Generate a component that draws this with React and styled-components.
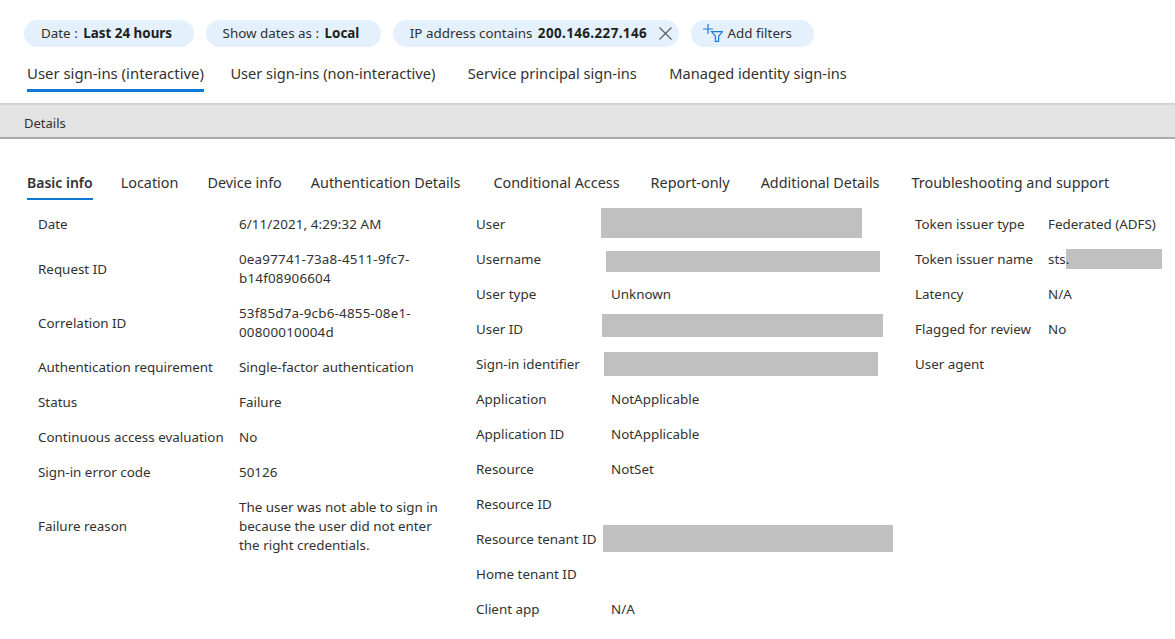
import React from 'react';
import styled, { createGlobalStyle } from 'styled-components';

const GlobalStyle = createGlobalStyle`
    html, body {
        margin: 0;
        padding: 0;
        background: #fff;
        font-family: "Noto Sans", "Open Sans", sans-serif;
        font-size: 13.4px;
        color: #323130;
    }
`;

const columnOne = [
    { label: 'Date', lines: ['6/11/2021, 4:29:32 AM'], spacing: 0.1 },
    { label: 'Request ID', lines: ['0ea97741-73a8-4511-9fc7-', 'b14f08906604'], spacing: 0.2 },
    { label: 'Correlation ID', lines: ['53f85d7a-9cb6-4855-08e1-', '00800010004d'], spacing: 0.2 },
    { label: 'Authentication requirement', lines: ['Single-factor authentication'] },
    { label: 'Status', lines: ['Failure'] },
    { label: 'Continuous access evaluation', lines: ['No'] },
    { label: 'Sign-in error code', lines: ['50126'] },
    { label: 'Failure reason', lines: ['The user was not able to sign in', 'because the user did not enter', 'the right credentials.'] },
];

const columnTwo = [
    { label: 'User', mask: { left: -10, top: -17, w: 261, h: 30 } },
    { label: 'Username', mask: { left: -5, top: -9, w: 274, h: 21 } },
    { label: 'User type', value: 'Unknown' },
    { label: 'User ID', mask: { left: -9, top: -16, w: 281, h: 23 } },
    { label: 'Sign-in identifier', mask: { left: -7, top: -13, w: 274, h: 24 } },
    { label: 'Application', value: 'NotApplicable' },
    { label: 'Application ID', value: 'NotApplicable' },
    { label: 'Resource', value: 'NotSet' },
    { label: 'Resource ID' },
    { label: 'Resource tenant ID', mask: { left: -8, top: -15, w: 290, h: 27 } },
    { label: 'Home tenant ID' },
    { label: 'Client app', value: 'N/A' },
];

const columnThree = [
    { label: 'Token issuer type', value: 'Federated (ADFS)' },
    { label: 'Token issuer name', value: 'sts.', mask: { left: 18, top: -11, w: 96, h: 20 } },
    { label: 'Latency', value: 'N/A' },
    { label: 'Flagged for review', value: 'No' },
    { label: 'User agent' },
];

const signInTabs = ['User sign-ins (interactive)', 'User sign-ins (non-interactive)', 'Service principal sign-ins', 'Managed identity sign-ins'];

const detailTabs = [
    { name: 'Basic info', after: 28 },
    { name: 'Location', after: 29 },
    { name: 'Device info', after: 29 },
    { name: 'Authentication Details', after: 33 },
    { name: 'Conditional Access', after: 31 },
    { name: 'Report-only', after: 31 },
    { name: 'Additional Details', after: 32 },
    { name: 'Troubleshooting and support', after: 0 },
];

const AddFilterIcon = () => (
    <svg width="20" height="18" viewBox="0 0 20 18" fill="none" stroke="#1a7bd6" strokeWidth="1.2">
        <path d="M0 5H10M5 0V10" />
        <path d="M8.5 7.6H19.5L15.6 12.2V17.4H12.4V12.2Z" />
    </svg>
);

const CloseIcon = () => (
    <svg width="13" height="13" viewBox="0 0 13 13" stroke="#605e5c" strokeWidth="1.2">
        <path d="M0.5 0.5L12.5 12.5M12.5 0.5L0.5 12.5" />
    </svg>
);

const App = () => (
    <Page>
        <GlobalStyle />
        <Filters>
            <Pill>Date : <b>Last 24 hours</b></Pill>
            <Pill>Show dates as : <b>Local</b></Pill>
            <ClosablePill>IP address contains <b>200.146.227.146</b><CloseIcon /></ClosablePill>
            <AddPill><AddFilterIcon />Add filters</AddPill>
        </Filters>
        <SignInTabs>
            {signInTabs.map((tab, i) => <SignInTab key={tab} $active={i === 0}>{tab}</SignInTab>)}
        </SignInTabs>
        <DetailsBar>Details</DetailsBar>
        <DetailTabs>
            {detailTabs.map((tab, i) => <DetailTab key={tab.name} $active={i === 0} $after={tab.after}>{tab.name}</DetailTab>)}
        </DetailTabs>
        <Columns>
            <InfoList $labelWidth={201} $indent={38} $width={476}>
                {columnOne.map(row => (
                    <InfoRow key={row.label}>
                        <Label>{row.label}</Label>
                        <Value $spacing={row.spacing}>{row.lines.map(line => <div key={line}>{line}</div>)}</Value>
                    </InfoRow>
                ))}
            </InfoList>
            <InfoList $labelWidth={135} $indent={0} $width={439}>
                {columnTwo.map(row => (
                    <InfoRow key={row.label}>
                        <Label>{row.label}</Label>
                        <Value>{row.value}{row.mask && <Mask $m={row.mask} />}</Value>
                    </InfoRow>
                ))}
            </InfoList>
            <InfoList $labelWidth={133} $indent={0} $width={260}>
                {columnThree.map(row => (
                    <InfoRow key={row.label}>
                        <Label>{row.label}</Label>
                        <Value>{row.mask && <Mask $m={row.mask} />}<ValueText>{row.value}</ValueText></Value>
                    </InfoRow>
                ))}
            </InfoList>
        </Columns>
    </Page>
);

export default App;

const Page = styled.div`
    width: 1175px;
    height: 639px;
    overflow: hidden;
    padding-top: 20px;
    box-sizing: border-box;
`;

const Filters = styled.div`
    display: flex;
    gap: 11.5px;
    padding-left: 24px;
`;

const Pill = styled.div`
    display: flex;
    align-items: center;
    gap: 2px;
    white-space: pre;
    height: 27px;
    padding: 0 22px 1px 17px;
    box-sizing: border-box;
    border-radius: 14px;
    background: #e4f0fb;
    color: #323130;

    b {
        color: #201f1e;
        font-weight: 700;
    }
`;

const ClosablePill = styled(Pill)`
    padding-right: 7px;

    b {
        letter-spacing: 0.4px;
    }

    svg {
        margin-left: 10px;
    }
`;

const AddPill = styled(Pill)`
    padding-left: 12px;
    gap: 5px;
`;

const SignInTabs = styled.div`
    display: flex;
    gap: 32.5px;
    margin-top: 8px;
    padding-left: 27px;
`;

const SignInTab = styled.div`
    font-size: ${p => p.$active ? '14.9px' : '14.6px'};
    line-height: 20px;
    padding: 8px 0 6px;
    margin-right: ${p => p.$active ? '-6px' : '0'};
    border-bottom: 3px solid ${p => p.$active ? '#0f78d4' : 'transparent'};
`;

const DetailsBar = styled.div`
    margin-top: 11px;
    height: 36px;
    box-sizing: border-box;
    padding: 3px 24px 0;
    display: flex;
    align-items: center;
    background: #e3e3e3;
    border-top: 2px solid #d2d2d2;
    border-bottom: 2px solid #ababab;
    font-size: 13px;
`;

const DetailTabs = styled.div`
    display: flex;
    margin-top: 34px;
    padding-left: 27px;
`;

const DetailTab = styled.div`
    font-size: ${p => p.$active ? '14px' : '14.4px'};
    line-height: 20px;
    padding-bottom: 5px;
    margin-right: ${p => p.$after}px;
    border-bottom: 2px solid ${p => p.$active ? '#0f78d4' : 'transparent'};
    font-weight: ${p => p.$active ? 600 : 400};
`;

const Columns = styled.div`
    display: flex;
    margin-top: 7px;
`;

const InfoList = styled.div`
    --label: ${p => p.$labelWidth}px;
    width: ${p => p.$width}px;
    padding-left: ${p => p.$indent}px;
    box-sizing: border-box;
    flex: none;
`;

const InfoRow = styled.div`
    display: grid;
    grid-template-columns: var(--label) 1fr;
    align-items: center;
    padding: 8px 0;
`;

const Label = styled.div`
    line-height: 19px;
    white-space: nowrap;
`;

const Value = styled.div`
    position: relative;
    line-height: 19px;
    min-height: 19px;
    white-space: nowrap;
    letter-spacing: ${p => p.$spacing || 0}px;
`;

const ValueText = styled.span`
    position: relative;
`;

const Mask = styled.div`
    position: absolute;
    left: ${p => p.$m.left}px;
    top: calc(50% + ${p => p.$m.top}px);
    width: ${p => p.$m.w}px;
    height: ${p => p.$m.h}px;
    background: #c0c0c0;
`;
